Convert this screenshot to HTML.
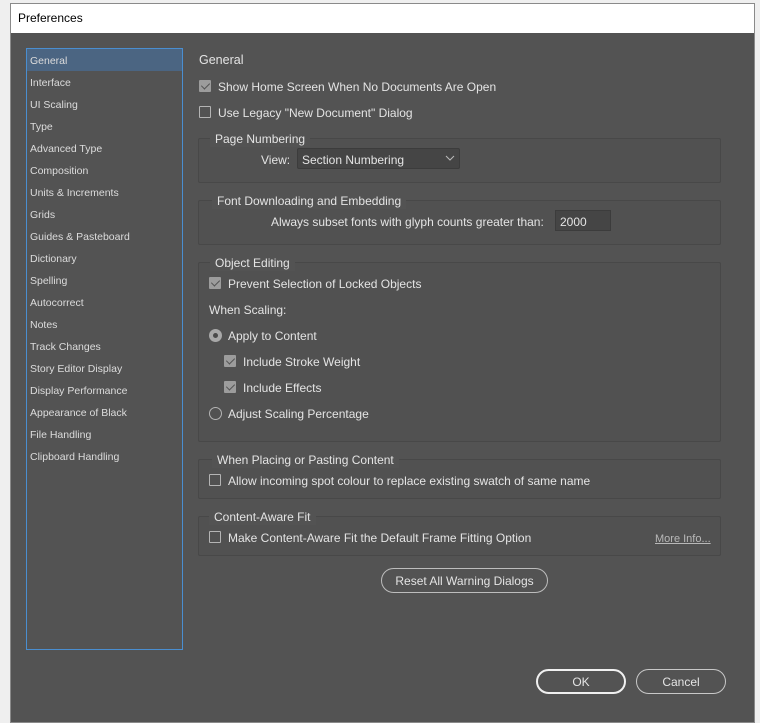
<!DOCTYPE html>
<html><head><meta charset="utf-8"><style>
*{margin:0;padding:0;box-sizing:border-box}
body{width:760px;height:713px;background:#efefef;font-family:"Liberation Sans",sans-serif;position:relative;overflow:hidden}
.win{position:absolute;left:10px;top:3px;width:745px;height:720px;background:#535353;border:1px solid #8a8a8a}
.title{position:absolute;left:10px;top:3px;width:745px;height:30px;background:#fff;border:1px solid #8a8a8a;border-bottom:none;font-size:12px;line-height:29px;padding-left:7px;color:#000}
.a{position:absolute;white-space:nowrap;color:#e4e4e4;font-size:12px;line-height:16px;margin-top:1px}
.side{position:absolute;left:26px;top:48px;width:157px;height:602px;border:1px solid #4a8ed0;background:#535353}
.si{position:absolute;left:3px;font-size:10.5px;color:#dcdcdc;line-height:16px;margin-top:1px}
.sel{position:absolute;left:0;top:0;width:155px;height:22px;background:#4b6582}
.grp{position:absolute;left:198px;width:523px;border:1px solid #484848;background:#515151;border-radius:2px}
.gt{position:absolute;background:#535353;padding:0 5px;font-size:12px;color:#e4e4e4;line-height:16px;margin-top:1px}
.cb{position:absolute;width:12px;height:12px;border:1px solid #b4b4b4;border-radius:1px}
.cb.on{background:#9c9c9c;border-color:#9c9c9c}
.cb.on::after{content:"";position:absolute;left:3px;top:0px;width:4px;height:7px;border:solid #555;border-width:0 1.6px 1.6px 0;transform:rotate(45deg)}
.rd{position:absolute;width:13px;height:13px;border:1px solid #b4b4b4;border-radius:50%}
.rd.on{background:#a8a8a8;border-color:#a8a8a8}
.rd.on::after{content:"";position:absolute;left:3px;top:3px;width:5px;height:5px;border-radius:50%;background:#4a4a4a}
.btn{position:absolute;border:1px solid #c8c8c8;border-radius:13px;color:#e4e4e4;font-size:12px;text-align:center}
</style></head><body>
<div class="win"></div>
<div class="title">Preferences</div>
<div class="side">
<div class="sel"></div>
<div class="si" style="top:3px">General</div>
<div class="si" style="top:25px">Interface</div>
<div class="si" style="top:47px">UI Scaling</div>
<div class="si" style="top:69px">Type</div>
<div class="si" style="top:91px">Advanced Type</div>
<div class="si" style="top:113px">Composition</div>
<div class="si" style="top:135px">Units &amp; Increments</div>
<div class="si" style="top:157px">Grids</div>
<div class="si" style="top:179px">Guides &amp; Pasteboard</div>
<div class="si" style="top:201px">Dictionary</div>
<div class="si" style="top:223px">Spelling</div>
<div class="si" style="top:245px">Autocorrect</div>
<div class="si" style="top:267px">Notes</div>
<div class="si" style="top:289px">Track Changes</div>
<div class="si" style="top:311px">Story Editor Display</div>
<div class="si" style="top:333px">Display Performance</div>
<div class="si" style="top:355px">Appearance of Black</div>
<div class="si" style="top:377px">File Handling</div>
<div class="si" style="top:399px">Clipboard Handling</div>
</div>

<div class="a" style="left:199px;top:51px;font-size:12.5px">General</div>
<div class="cb on" style="left:199px;top:80px"></div>
<div class="a" style="left:218px;top:78px">Show Home Screen When No Documents Are Open</div>
<div class="cb" style="left:199px;top:106px"></div>
<div class="a" style="left:218px;top:104px">Use Legacy "New Document" Dialog</div>

<div class="grp" style="top:138px;height:45px"></div>
<div class="gt" style="left:210px;top:130px">Page Numbering</div>
<div class="a" style="left:261px;top:151px">View:</div>
<div style="position:absolute;left:297px;top:148px;width:163px;height:21px;background:#454545;border:1px solid #3c3c3c;border-radius:2px"></div>
<div class="a" style="left:302px;top:151px">Section Numbering</div>
<svg style="position:absolute;left:445px;top:155px" width="10" height="6"><path d="M1 1 L5 5 L9 1" fill="none" stroke="#bbb" stroke-width="1"/></svg>

<div class="grp" style="top:200px;height:45px"></div>
<div class="gt" style="left:212px;top:192px">Font Downloading and Embedding</div>
<div class="a" style="left:271px;top:213px">Always subset fonts with glyph counts greater than:</div>
<div style="position:absolute;left:555px;top:210px;width:56px;height:21px;background:#454545;border:1px solid #3c3c3c"></div>
<div class="a" style="left:560px;top:213px">2000</div>

<div class="grp" style="top:262px;height:180px"></div>
<div class="gt" style="left:210px;top:254px">Object Editing</div>
<div class="cb on" style="left:209px;top:277px"></div>
<div class="a" style="left:228px;top:275px">Prevent Selection of Locked Objects</div>
<div class="a" style="left:209px;top:301px">When Scaling:</div>
<div class="rd on" style="left:209px;top:329px"></div>
<div class="a" style="left:228px;top:327px">Apply to Content</div>
<div class="cb on" style="left:224px;top:355px"></div>
<div class="a" style="left:243px;top:353px">Include Stroke Weight</div>
<div class="cb on" style="left:224px;top:381px"></div>
<div class="a" style="left:243px;top:379px">Include Effects</div>
<div class="rd" style="left:209px;top:407px"></div>
<div class="a" style="left:228px;top:405px">Adjust Scaling Percentage</div>

<div class="grp" style="top:459px;height:40px"></div>
<div class="gt" style="left:212px;top:451px">When Placing or Pasting Content</div>
<div class="cb" style="left:209px;top:474px"></div>
<div class="a" style="left:228px;top:472px">Allow incoming spot colour to replace existing swatch of same name</div>

<div class="grp" style="top:516px;height:40px"></div>
<div class="gt" style="left:209px;top:508px">Content-Aware Fit</div>
<div class="cb" style="left:209px;top:531px"></div>
<div class="a" style="left:228px;top:529px">Make Content-Aware Fit the Default Frame Fitting Option</div>
<div class="a" style="left:655px;top:530px;font-size:11px;color:#b8b8b8;text-decoration:underline">More Info...</div>

<div class="btn" style="left:381px;top:568px;width:167px;height:25px;line-height:24px;border-color:#bdbdbd">Reset All Warning Dialogs</div>
<div class="btn" style="left:536px;top:669px;width:90px;height:25px;line-height:23px;border:2px solid #f0f0f0">OK</div>
<div class="btn" style="left:636px;top:669px;width:90px;height:25px;line-height:25px">Cancel</div>
</body></html>
